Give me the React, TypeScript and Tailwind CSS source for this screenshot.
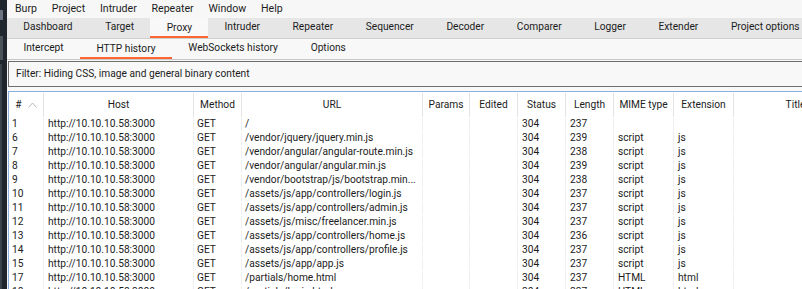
import React from "react";

const menus = ["Burp", "Project", "Intruder", "Repeater", "Window", "Help"];
const tabs = ["Dashboard", "Target", "Proxy", "Intruder", "Repeater", "Sequencer", "Decoder", "Comparer", "Logger", "Extender", "Project options"];
const subtabs = ["Intercept", "HTTP history", "WebSockets history", "Options"];

const cols = [
  { name: "#", w: 35 },
  { name: "Host", w: 150 },
  { name: "Method", w: 48 },
  { name: "URL", w: 181 },
  { name: "Params", w: 47 },
  { name: "Edited", w: 48 },
  { name: "Status", w: 48 },
  { name: "Length", w: 48 },
  { name: "MIME type", w: 60 },
  { name: "Extension", w: 60 },
  { name: "Title", w: 124 },
];

const H = "http://10.10.10.58:3000";
const rows: string[][] = [
  ["1", H, "GET", "/", "", "", "304", "237", "", "", ""],
  ["6", H, "GET", "/vendor/jquery/jquery.min.js", "", "", "304", "239", "script", "js", ""],
  ["7", H, "GET", "/vendor/angular/angular-route.min.js", "", "", "304", "238", "script", "js", ""],
  ["8", H, "GET", "/vendor/angular/angular.min.js", "", "", "304", "239", "script", "js", ""],
  ["9", H, "GET", "/vendor/bootstrap/js/bootstrap.min...", "", "", "304", "238", "script", "js", ""],
  ["10", H, "GET", "/assets/js/app/controllers/login.js", "", "", "304", "237", "script", "js", ""],
  ["11", H, "GET", "/assets/js/app/controllers/admin.js", "", "", "304", "237", "script", "js", ""],
  ["12", H, "GET", "/assets/js/misc/freelancer.min.js", "", "", "304", "237", "script", "js", ""],
  ["13", H, "GET", "/assets/js/app/controllers/home.js", "", "", "304", "236", "script", "js", ""],
  ["14", H, "GET", "/assets/js/app/controllers/profile.js", "", "", "304", "237", "script", "js", ""],
  ["15", H, "GET", "/assets/js/app/app.js", "", "", "304", "237", "script", "js", ""],
  ["17", H, "GET", "/partials/home.html", "", "", "304", "237", "HTML", "html", ""],
  ["18", H, "GET", "/partials/login.html", "", "", "304", "237", "HTML", "html", ""],
];

export default function App() {
  return (
    <div
      className="flex h-[289px] w-[802px] overflow-hidden bg-[#f8f8f8] text-[10.2px] text-[#1c1c1c]"
      style={{ fontFamily: 'Roboto, "Noto Sans", sans-serif' }}
    >
      {/* desktop strip */}
      <div className="flex w-[7px] shrink-0 flex-col bg-[#1f262e]">
        <div className="mt-[10px] h-[10px] w-[3px] bg-[#6b7480]" />
        <div className="mt-[16px] h-[24px] w-[3px] bg-[#4a525c]" />
        <div className="mt-[4px] flex-1 border-l-2 border-[#3a424c]" />
      </div>

      <div className="flex min-w-0 flex-1 flex-col">
        {/* menu bar */}
        <div className="flex h-[18px] shrink-0 items-center bg-[#f7f7f7] pl-[0.6px] text-[10.6px]">
          {menus.map((m) => (
            <span key={m} className="px-[7.4px] leading-none">
              {m}
            </span>
          ))}
        </div>

        {/* main tabs */}
        <div className="flex h-[21px] shrink-0 border-b border-[#cfcfcf] bg-[#e6e6e6]">
          {tabs.map((t) => (
            <div
              key={t}
              className={
                t === "Proxy"
                  ? "flex shrink-0 items-center whitespace-nowrap border-b-2 border-[#ff6633] bg-[#f8f8f8] px-[16.3px] pt-[2px]"
                  : "flex shrink-0 items-center whitespace-nowrap px-[16.3px] pb-[2px]"
              }
            >
              {t}
            </div>
          ))}
        </div>

        {/* sub tabs */}
        <div className="flex h-[21px] shrink-0 border-b border-[#c8c8c8] bg-[#f8f8f8]">
          {subtabs.map((t) => (
            <div
              key={t}
              className={
                t === "HTTP history"
                  ? "flex shrink-0 items-center whitespace-nowrap border-b-2 border-[#ff6633] px-[16.4px] pt-[2px]"
                  : "flex shrink-0 items-center whitespace-nowrap px-[16.4px] pb-[2px]"
              }
            >
              {t}
            </div>
          ))}
        </div>

        {/* filter */}
        <div className="mt-[1px] ml-px flex h-[26px] shrink-0 items-center border border-[#6e6e6e] border-r-0 bg-[#f8f8f8] pl-[7px]">
          Filter: Hiding CSS, image and general binary content
        </div>

        {/* table */}
        <div className="mt-[4px] ml-px flex min-h-0 flex-1 flex-col border-l border-t border-[#8eb0dc] bg-white">
          <div className="flex h-[25px] shrink-0 pt-px">
            {cols.map((c, i) => (
              <div
                key={c.name}
                className="flex shrink-0 items-center justify-center whitespace-nowrap border-r border-[#e3e3e3]"
                style={{ width: c.w }}
              >
                {i === 0 ? (
                  <span className="flex items-center gap-[6px]">
                    <span>#</span>
                    <svg width="9" height="6" viewBox="0 0 9 6">
                      <path d="M0.5 5.5 L4.5 1 L8.5 5.5" fill="none" stroke="#b8b8b8" strokeWidth="1" />
                    </svg>
                  </span>
                ) : (
                  c.name
                )}
              </div>
            ))}
          </div>
          {rows.map((r, ri) => (
            <div key={ri} className="flex h-[14px] shrink-0 pt-px">
              {r.map((v, i) => (
                <div
                  key={i}
                  className={
                    "flex shrink-0 items-center overflow-hidden whitespace-nowrap border-r border-[#efefef] leading-none " +
                    (i === 0 || i === 2 || i === 3 ? "pl-[3px]" : "pl-[4px]")
                  }
                  style={{ width: cols[i].w }}
                >
                  {v}
                </div>
              ))}
            </div>
          ))}
        </div>
      </div>
    </div>
  );
}
